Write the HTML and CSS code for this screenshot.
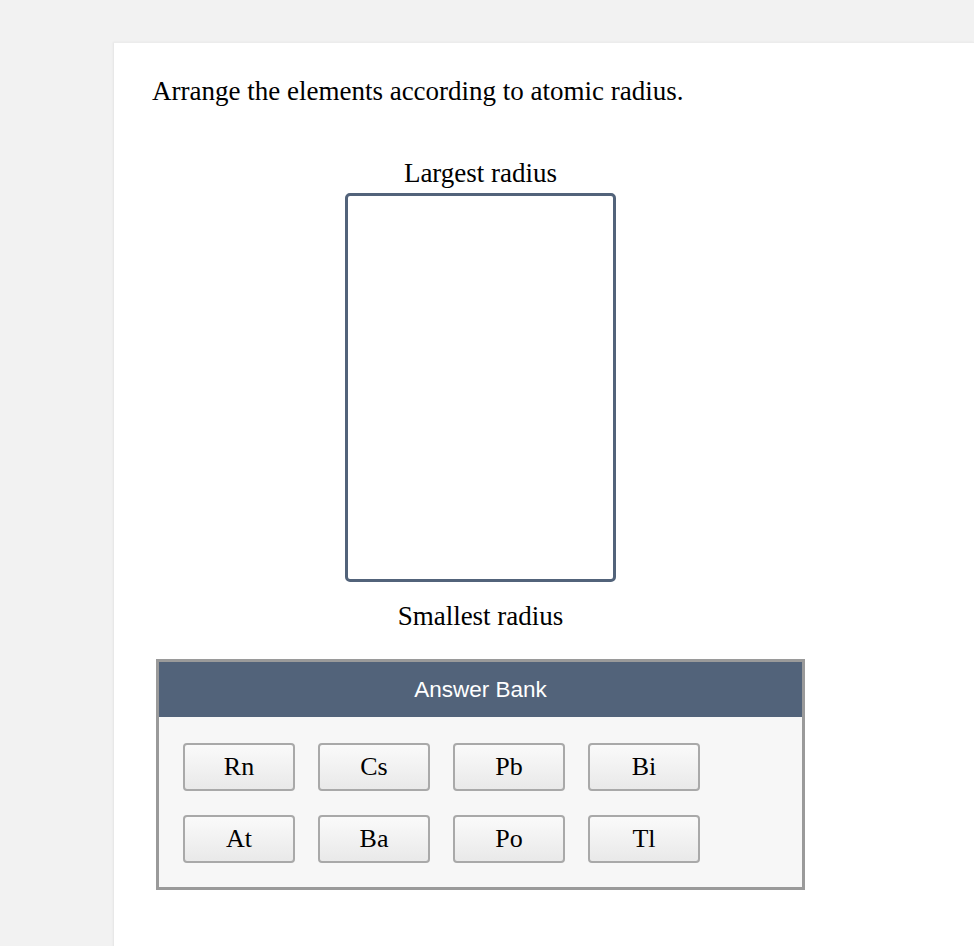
FILE: index.html
```html
<!DOCTYPE html>
<html lang="en">
<head>
<meta charset="utf-8">
<title>Arrange the elements</title>
<link rel="stylesheet" href="styles.css">
</head>
<body>
<div class="panel">
  <p class="prompt">Arrange the elements according to atomic radius.</p>
  <div class="question">
    <div class="label label-top">Largest radius</div>
    <div class="dropzone"></div>
    <div class="label label-bottom">Smallest radius</div>
    <div class="bank">
      <div class="bank-header">Answer Bank</div>
      <div class="bank-body">
        <div class="chip">Rn</div>
        <div class="chip">Cs</div>
        <div class="chip">Pb</div>
        <div class="chip">Bi</div>
        <div class="chip">At</div>
        <div class="chip">Ba</div>
        <div class="chip">Po</div>
        <div class="chip">Tl</div>
      </div>
    </div>
  </div>
</div>
</body>
</html>
```
FILE: styles.css
```css
html, body {
  margin: 0;
  padding: 0;
  background: #f2f2f2;
  height: 100%;
}
body {
  font-family: "Liberation Serif", "Times New Roman", serif;
  color: #000;
  overflow: hidden;
}
.panel {
  margin-left: 114px;
  margin-top: 42px;
  background: #fff;
  min-height: 920px;
  padding: 1px 0 0 38px;
  box-shadow: -1px 0 2px rgba(0,0,0,0.06);
  border-top: 1px solid #ececec;
}
.prompt {
  margin: 32px 0 0 0;
  font-size: 27px;
  line-height: 30px;
}
.question {
  width: 649px;
  margin-left: 4px;
  margin-top: 52px;
  display: flex;
  flex-direction: column;
  align-items: center;
}
.label {
  font-size: 27px;
  line-height: 30px;
}
.dropzone {
  margin-top: 5px;
  width: 265px;
  height: 383px;
  border: 3px solid #52637a;
  border-radius: 5px;
}
.label-bottom {
  margin-top: 19px;
}
.bank {
  box-sizing: border-box;
  margin-top: 28px;
  width: 649px;
  border: 3px solid #9a9a9a;
  background: #f7f7f7;
}
.bank-header {
  height: 55px;
  background: #52637a;
  color: #fff;
  font-family: "Liberation Sans", Arial, sans-serif;
  font-size: 22.5px;
  line-height: 55px;
  text-align: center;
}
.bank-body {
  display: grid;
  grid-template-columns: repeat(4, 112px);
  column-gap: 23px;
  row-gap: 24px;
  padding: 26px 23px 24px 24px;
}
.chip {
  height: 44px;
  border: 2px solid #a9a9a9;
  border-radius: 4px;
  background: linear-gradient(#fafafa, #e9e9e9);
  font-size: 26px;
  line-height: 44px;
  text-align: center;
}
```
